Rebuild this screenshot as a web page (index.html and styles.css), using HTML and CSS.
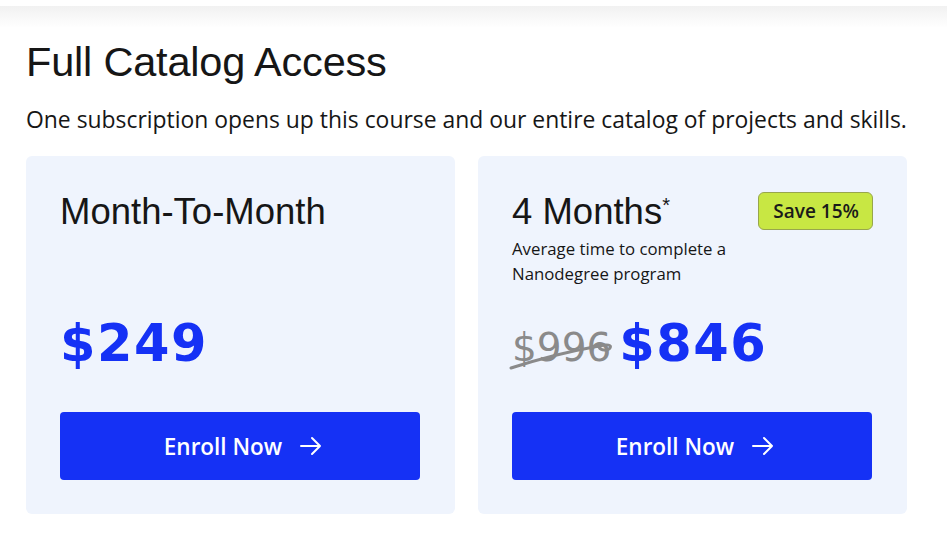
FILE: index.html
```html
<!DOCTYPE html>
<html lang="en">
<head>
<meta charset="UTF-8">
<title>Full Catalog Access</title>
<link rel="stylesheet" href="styles.css">
</head>
<body>

<div class="topbar"></div>

<div class="catalog">
  <h1>Full Catalog Access</h1>
  <p class="lead">One subscription opens up this course and our entire catalog of projects and skills.</p>

  <div class="plans">
    <div class="plan">
      <h2>Month-To-Month</h2>
      <div class="price">
        <span class="now">$249</span>
      </div>
      <a class="enroll" href="#">Enroll Now
        <svg width="22" height="20" viewBox="0 0 22 20"><path d="M1 10H20M12 2L20 10L12 18" fill="none" stroke="#fff" stroke-width="2" stroke-linecap="round" stroke-linejoin="round"/></svg>
      </a>
    </div>

    <div class="plan">
      <div class="plan-head">
        <h2>4 Months<sup>*</sup></h2>
        <span class="badge">Save 15%</span>
      </div>
      <p class="note">Average time to complete a<br>Nanodegree program</p>
      <div class="price">
        <span class="was">$996
          <svg class="strike" width="106" height="36" viewBox="0 0 106 36"><path d="M2 32C30 23 62 15 90 10C99 8 103 9 101 12C99 15 92 15 90 11" fill="none" stroke="#8a8a8a" stroke-width="3" stroke-linecap="round"/></svg>
        </span>
        <span class="now">$846</span>
      </div>
      <a class="enroll" href="#">Enroll Now
        <svg width="22" height="20" viewBox="0 0 22 20"><path d="M1 10H20M12 2L20 10L12 18" fill="none" stroke="#fff" stroke-width="2" stroke-linecap="round" stroke-linejoin="round"/></svg>
      </a>
    </div>
  </div>
</div>

</body>
</html>
```

FILE: styles.css
```css
body { margin: 0; background: #fff; color: #161616; font-family: "Open Sans", sans-serif; }
.topbar { margin-top: 6px; height: 22px; background: linear-gradient(#f1f1f1, #fff); }
.catalog { padding: 0 26px; }
h1 { margin: 10px 0 0; font-family: "Liberation Sans", Arial, sans-serif; font-weight: 400; font-size: 41.5px; line-height: 48px; letter-spacing: -0.2px; }
.lead { margin: 19px 0 0; font-size: 22.9px; line-height: 30px; }
.plans { display: grid; grid-template-columns: 429px 429px; gap: 23px; margin-top: 21px; }
.plan { background: #eff4fd; border-radius: 6px; height: 358px; box-sizing: border-box; padding: 36px 35px 34px 34px; display: flex; flex-direction: column; }
.plan h2 { margin: 0; font-family: "Liberation Sans", Arial, sans-serif; font-weight: 400; font-size: 36.5px; line-height: 40px; }
.plan h2 sup { font-size: 20px; vertical-align: 0; position: relative; top: -12px; }
.plan-head { display: flex; justify-content: space-between; align-items: flex-start; }
.badge { margin-top: 0; margin-right: -1px; background: #c8e743; border: 1px solid #98a64c; border-radius: 6px; padding: 0 13px 0 14px; height: 36px; line-height: 36px; font-size: 19px; font-weight: 600; color: #1a1a1a; }
.note { margin: -1px 0 0; font-size: 16.8px; line-height: 25px; }
.price { margin-top: auto; display: flex; align-items: baseline; gap: 8px; }
.now { font-family: "DejaVu Sans", sans-serif; font-weight: 700; font-size: 51px; line-height: 56px; color: #1531f5; letter-spacing: 1.5px; }
.was { position: relative; font-family: "DejaVu Sans", sans-serif; font-size: 39px; color: #8a8a8a; }
.strike { position: absolute; left: -3px; top: 11px; }
.enroll { margin-top: 40px; height: 68px; border-radius: 4px; background: #1531f5; color: #fff; text-decoration: none; display: flex; align-items: center; justify-content: center; gap: 18px; padding-left: 6px; font-size: 22.5px; font-weight: 600; }
```
